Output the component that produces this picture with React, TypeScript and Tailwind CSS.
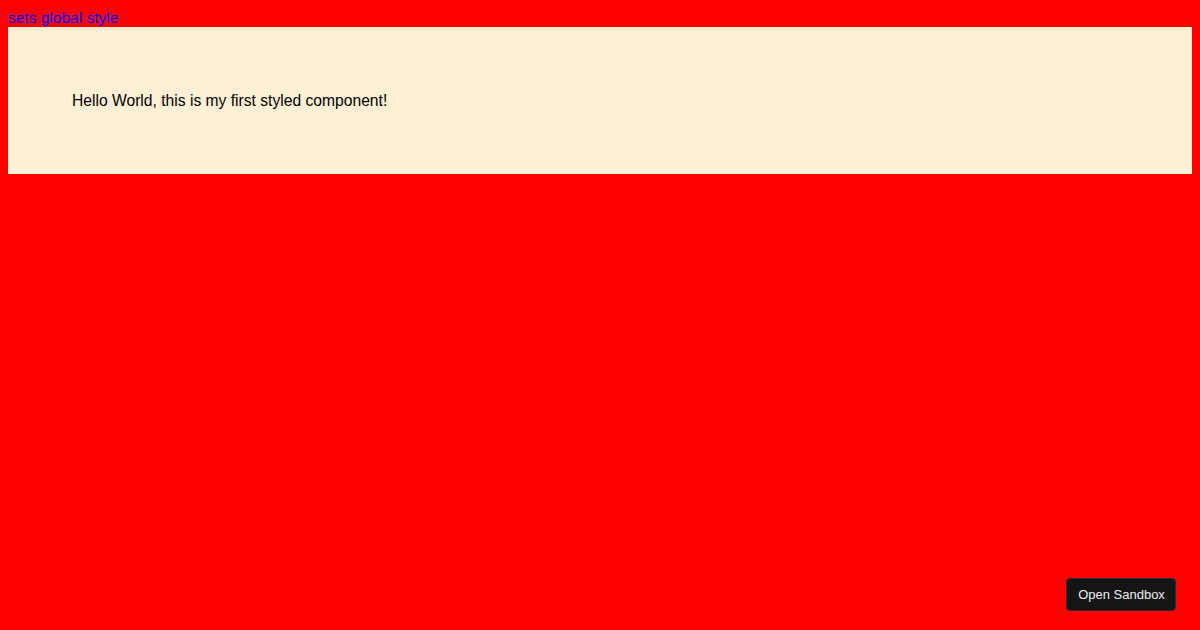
export default function App() {
  return (
    <div className="min-h-screen bg-[#ff0000] p-2 font-['Liberation_Sans',Arial,sans-serif] text-[15.5px] leading-[19px]">
      <div className="text-[#0000ff]">sets global style</div>
      <div className="bg-[#ffefd5] p-16 text-[15.65px] text-black">Hello World, this is my first styled component!</div>
      <button className="fixed bottom-[19px] right-6 h-[33px] w-[110px] rounded-[4px] border border-[#2a2a3a] bg-[#151515] pl-[1px] text-[13px] leading-[normal] text-[#eeeeee] font-['Liberation_Sans',Arial,sans-serif]">
        Open Sandbox
      </button>
    </div>
  );
}
